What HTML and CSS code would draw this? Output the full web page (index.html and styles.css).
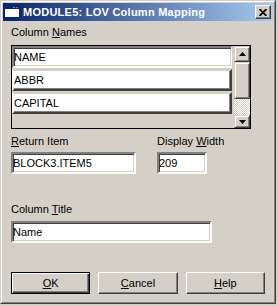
FILE: index.html
```html
<!DOCTYPE html>
<html>
<head>
	<meta charset="utf-8">
	<title>MODULE5: LOV Column Mapping</title>
	<link rel="stylesheet" href="styles.css">
</head>
<body>

	<div class="window"><div class="frame">
		<div class="titlebar">
			<svg class="app-icon" viewBox="0 0 16 16" width="16" height="16">
				<rect x="0.5" y="1.5" width="15" height="12" fill="#fff" stroke="#0a246a"/>
				<rect x="1" y="2" width="14" height="3" fill="#0a246a"/>
				<rect x="12" y="3" width="2" height="1" fill="#e05020"/>
				<rect x="9" y="3" width="2" height="1" fill="#6a8ae0"/>
			</svg>
			<span class="title">MODULE5: LOV Column Mapping</span>
			<div class="close-btn">
				<svg viewBox="0 0 8 7" width="8" height="7">
					<path d="M0.5 0 L7.5 7 M7.5 0 L0.5 7" stroke="#000" stroke-width="1.8" fill="none"/>
				</svg>
			</div>
		</div>

		<div class="content">
			<div class="label first">Column <u>N</u>ames</div>
			<div class="listbox">
				<div class="rows">
					<div class="row current">NAME</div>
					<div class="row">ABBR</div>
					<div class="row">CAPITAL</div>
				</div>
				<div class="scrollbar">
					<div class="sb-btn up">
						<svg viewBox="0 0 7 4" width="7" height="4"><polygon points="3.5,0 7,4 0,4" fill="#000"/></svg>
					</div>
					<div class="sb-thumb"></div>
					<div class="sb-track"></div>
					<div class="sb-btn down">
						<svg viewBox="0 0 7 4" width="7" height="4"><polygon points="0,0 7,0 3.5,4" fill="#000"/></svg>
					</div>
				</div>
			</div>

			<div class="pair">
				<div class="field return-item">
					<div class="label"><u>R</u>eturn Item</div>
					<div class="input w-return">BLOCK3.ITEM5</div>
				</div>
				<div class="field">
					<div class="label">Display <u>W</u>idth</div>
					<div class="input w-width">209</div>
				</div>
			</div>

			<div class="field title-field">
				<div class="label">Column <u>T</u>itle</div>
				<div class="input w-title">Name</div>
			</div>

			<div class="buttons">
				<div class="btn default"><span><u>O</u>K</span></div>
				<div class="btn"><span><u>C</u>ancel</span></div>
				<div class="btn"><span><u>H</u>elp</span></div>
			</div>
		</div>
	</div></div>

</body>
</html>
```

FILE: styles.css
```css
body{margin: 0; background: #d4d0c8; font: 11px/13px "Liberation Sans", Arial, sans-serif; color: #000;}
u{text-decoration: underline; text-underline-offset: 1px;}

/* window frame */
.window{
	width: 276px;height: 304px;box-sizing: border-box;
	border: 1px solid;border-color: #d4d0c8 #404040 #404040 #d4d0c8;
}
.frame{
	height: 100%;box-sizing: border-box;padding: 1px;
	border: 1px solid;border-color: #fff #808080 #808080 #fff;
}

/* title bar */
.titlebar{
	height: 18px;display: flex;align-items: center;
	background: linear-gradient(to right, #0a246a, #a6caf0);
}
.app-icon{margin: 0 3px 0 1px;flex: none;}
.title{flex: 1;color: #fff;font-weight: bold;font-size: 11px;letter-spacing: 0.25px;white-space: nowrap;}
.close-btn{
	width: 16px;height: 14px;margin-right: 2px;box-sizing: border-box;
	display: flex;align-items: center;justify-content: center;
	background: #d4d0c8;
	border: 1px solid;border-color: #fff #404040 #404040 #fff;
	box-shadow: inset -1px -1px #808080;
}

.content{padding: 0 8px;}
.label{height: 13px;white-space: nowrap;}
.label.first{margin-top: 5px;}

/* list of column names */
.listbox{
	margin-top: 6px;
	width: 240px;height: 84px;box-sizing: border-box;
	border: 1px solid #000;
	display: flex;
}
.rows{flex: 1;}
.row{
	height: 22px;box-sizing: border-box;margin-bottom: 1px;
	padding-left: 0;line-height: 18px;background: #fff;
	border: 2px solid;border-color: #d4d0c8 #404040 #404040 #fff;
	box-shadow: inset -1px -1px #808080;
}
.row.current{
	border-color: #808080 #fff #fff #808080;
	box-shadow: inset 1px 1px #404040, inset -1px -1px #d4d0c8;
	border-width: 2px 1px 2px 2px;
}
.scrollbar{width: 16px;margin-left: 2px;display: flex;flex-direction: column;}
.sb-btn,.sb-thumb{
	box-sizing: border-box;background: #d4d0c8;
	border: 1px solid;border-color: #d4d0c8 #404040 #404040 #d4d0c8;
	box-shadow: inset 1px 1px #fff, inset -1px -1px #808080;
	display: flex;align-items: center;justify-content: center;
}
.sb-btn.up{height: 16px;}
.sb-thumb{height: 37px;}
.sb-track{height: 16px;background: repeating-conic-gradient(#fff 0 25%, #d4d0c8 0 50%) 0 0/2px 2px;}
.sb-btn.down{flex: 1;}

/* text fields */
.pair{display: flex;margin-top: 6px;}
.return-item{width: 146px;}
.input{
	margin-top: 4px;height: 22px;box-sizing: border-box;
	line-height: 18px;background: #fff;white-space: nowrap;
	border: 2px solid;border-color: #808080 #fff #fff #808080;
	box-shadow: inset 1px 1px #404040, inset -1px -1px #d4d0c8;
}
.w-return{width: 125px;}
.w-width{width: 50px;}
.title-field{margin-top: 29px;}
.title-field .input{margin-top: 5px;}
.w-title{width: 201px;}

/* buttons */
.buttons{display: flex;gap: 8px;margin-top: 29px;}
.btn{
	width: 80px;height: 22px;box-sizing: border-box;
	display: flex;align-items: center;justify-content: center;
	border: 1px solid;border-color: #fff #404040 #404040 #fff;
	box-shadow: inset -1px -1px #808080;
}
.btn.default{
	border: 1px solid #000;
	box-shadow: inset 1px 1px #fff, inset -1px -1px #404040, inset -2px -2px #808080;
}
```
